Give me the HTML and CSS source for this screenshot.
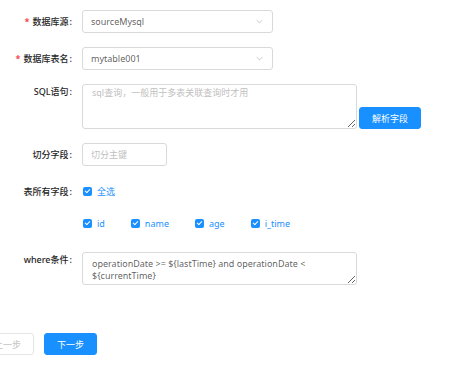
FILE: index.html
```html
<!DOCTYPE html>
<html lang="zh-CN">
<head>
  <meta charset="UTF-8">
  <meta name="viewport" content="width=device-width, initial-scale=1.0">
  <title>数据源配置</title>
  <link rel="stylesheet" href="styles.css">
</head>
<body>
  <form class="step-form">

    <!-- 数据库源 -->
    <div class="form-row">
      <label class="form-label required">数据库源</label>
      <div class="form-select select-wide">
        <span>sourceMysql</span>
        <svg class="select-arrow" viewBox="0 0 10 6" width="7" height="5"><path d="M1 1l4 4 4-4" fill="none" stroke="#bfbfbf" stroke-width="1.2"/></svg>
      </div>
    </div>

    <!-- 数据库表名 -->
    <div class="form-row">
      <label class="form-label required">数据库表名</label>
      <div class="form-select select-wide">
        <span>mytable001</span>
        <svg class="select-arrow" viewBox="0 0 10 6" width="7" height="5"><path d="M1 1l4 4 4-4" fill="none" stroke="#bfbfbf" stroke-width="1.2"/></svg>
      </div>
    </div>

    <!-- SQL语句 -->
    <div class="form-row">
      <label class="form-label label-top">SQL语句</label>
      <textarea class="form-textarea sql-area" placeholder="sql查询，一般用于多表关联查询时才用"></textarea>
      <button class="btn btn-primary btn-parse" type="button">解析字段</button>
    </div>

    <!-- 切分字段 -->
    <div class="form-row">
      <label class="form-label">切分字段</label>
      <input class="form-input split-input" type="text" placeholder="切分主键">
    </div>

    <!-- 表所有字段 -->
    <div class="form-row">
      <label class="form-label">表所有字段</label>
      <div class="field-box">
        <div class="check-line">
          <span class="check-item"><span class="check-box"></span><span class="check-text">全选</span></span>
        </div>
        <div class="check-line check-group">
          <span class="check-item"><span class="check-box"></span><span class="check-text">id</span></span>
          <span class="check-item"><span class="check-box"></span><span class="check-text">name</span></span>
          <span class="check-item"><span class="check-box"></span><span class="check-text">age</span></span>
          <span class="check-item"><span class="check-box"></span><span class="check-text">i_time</span></span>
        </div>
      </div>
    </div>

    <!-- where条件 -->
    <div class="form-row">
      <label class="form-label label-top">where条件</label>
      <textarea class="form-textarea where-area">operationDate >= ${lastTime} and operationDate < ${currentTime}</textarea>
    </div>

    <div class="form-actions">
      <button class="btn btn-default" type="button" disabled>上一步</button>
      <button class="btn btn-primary" type="button">下一步</button>
    </div>
  </form>
</body>
</html>
```

FILE: styles.css
```css
body {
  margin: 0;
  background: #fff;
  font-family: "Noto Sans", "Noto Sans CJK SC", sans-serif;
  font-size: 9px;
  color: rgba(0, 0, 0, 0.65);
}

.step-form {
  padding-top: 10px;
}

.form-row {
  display: flex;
  align-items: flex-start;
  margin-bottom: 14px;
}

.form-label {
  width: 82px;
  box-sizing: border-box;
  padding-right: 10px;
  text-align: right;
  line-height: 23px;
  color: #262626;
  font-weight: 500;
  flex-shrink: 0;
}

.form-label::after {
  content: ":";
  margin-left: 1px;
}

.form-label.required::before {
  content: "*";
  color: #f5222d;
  margin-right: 3px;
}

.label-top {
  line-height: 16px;
}

.form-select,
.form-input,
.form-textarea {
  box-sizing: border-box;
  border: 1px solid #d9d9d9;
  border-radius: 3px;
  background: #fff;
  font-family: inherit;
  font-size: 9px;
  color: rgba(0, 0, 0, 0.65);
}

.form-select {
  height: 23px;
  display: flex;
  align-items: center;
  justify-content: space-between;
  padding: 0 9px 0 8px;
}

.select-wide {
  width: 191px;
}

.form-input {
  height: 23px;
  padding: 0 8px;
  outline: none;
}

.split-input {
  width: 85px;
}

.form-textarea {
  width: 275px;
  padding: 2px 9px;
  line-height: 12px;
  resize: vertical;
  outline: none;
}

.sql-area {
  height: 45px;
}

.where-area {
  height: 33px;
  padding-top: 5px;
}

::placeholder {
  color: #bfbfbf;
}

.btn {
  width: 53px;
  height: 22px;
  padding: 0;
  border-radius: 3px;
  font-family: inherit;
  font-size: 9px;
  cursor: pointer;
}

.btn-primary {
  background: #1890ff;
  border: 1px solid #1890ff;
  color: #fff;
}

.btn-default {
  background: #fff;
  border: 1px solid #e4e4e4;
  color: #c4c4c4;
}

.btn-parse {
  align-self: flex-end;
  margin-left: 2px;
  width: 62px;
}

/* 字段勾选 */
.field-box {
  display: flex;
  flex-direction: column;
}

.check-line {
  display: flex;
  align-items: center;
  height: 23px;
}

.check-group {
  margin-top: 9px;
}

.check-item {
  display: flex;
  align-items: center;
  margin-right: 25px;
  padding-left: 1px;
}

.check-box {
  position: relative;
  width: 9px;
  height: 9px;
  border-radius: 2px;
  background: #1890ff;
}

.check-box::after {
  content: "";
  position: absolute;
  left: 3px;
  top: 1px;
  width: 2px;
  height: 4px;
  border: solid #fff;
  border-width: 0 1.5px 1.5px 0;
  transform: rotate(45deg);
}

.check-text {
  padding-left: 5px;
  color: #1890ff;
}

.form-row:nth-child(5) {
  margin-bottom: 17px;
}

.form-actions {
  display: flex;
  gap: 10px;
  margin-top: 48px;
  margin-left: -19px;
}
```
